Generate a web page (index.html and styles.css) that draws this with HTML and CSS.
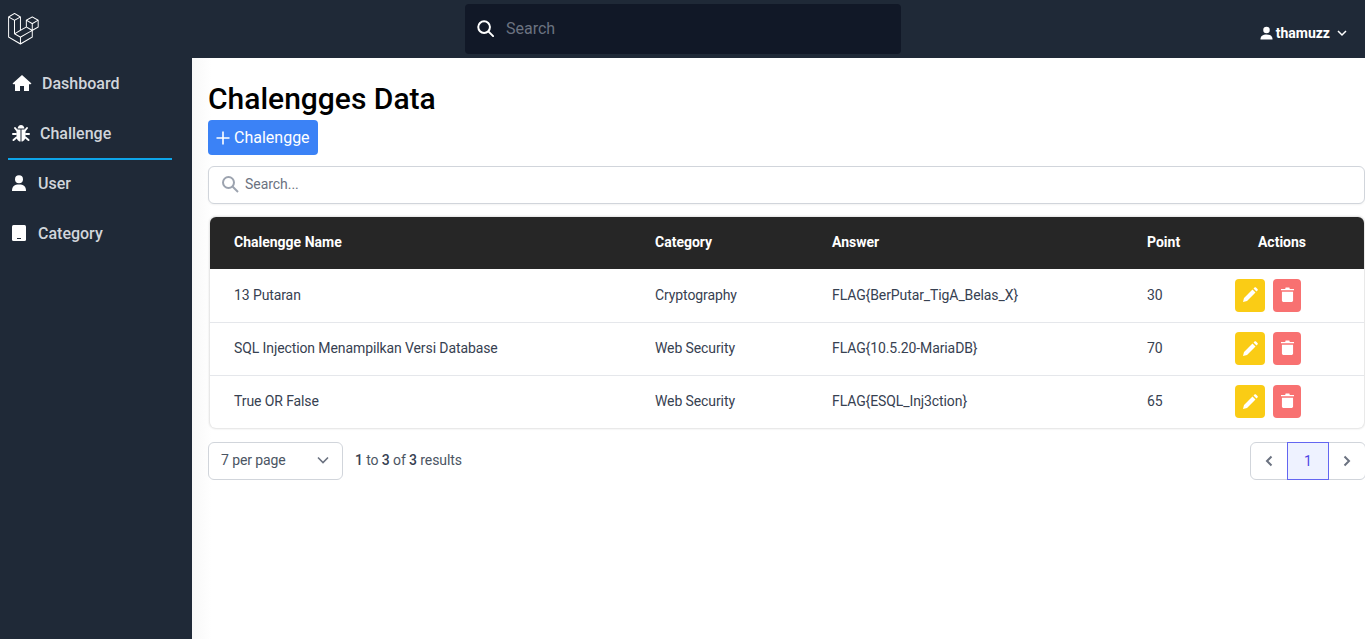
FILE: index.html
```html
<!DOCTYPE html>
<html lang="en">
<head>
<meta charset="utf-8">
<title>Chalengges Data</title>
<link rel="stylesheet" href="styles.css">
</head>
<body>
<header class="topbar">
  <div class="logo">
    <svg width="31" height="32" viewBox="0 0 50 52" fill="#fff"><path d="M49.626 11.564a.809.809 0 0 1 .028.209v10.972a.8.8 0 0 1-.402.694l-9.209 5.302V39.25c0 .286-.152.55-.4.694L20.42 51.01c-.044.025-.092.041-.14.058-.018.006-.035.017-.054.022a.805.805 0 0 1-.41 0c-.022-.006-.042-.018-.063-.026-.044-.016-.09-.03-.132-.054L.402 39.944A.801.801 0 0 1 0 39.25V6.334c0-.072.01-.142.028-.21.006-.023.02-.044.028-.067.015-.042.029-.085.051-.124.015-.026.037-.047.055-.071.023-.032.044-.065.071-.093.023-.023.053-.04.079-.06.029-.024.055-.05.088-.069h.001l9.61-5.533a.802.802 0 0 1 .8 0l9.61 5.533h.002c.032.02.059.045.088.068.026.02.055.038.078.06.028.029.048.062.072.094.017.024.04.045.054.071.023.04.036.082.052.124.008.023.022.044.028.068a.809.809 0 0 1 .028.209v20.559l8.008-4.611v-10.51c0-.07.01-.141.028-.208.007-.024.02-.045.028-.068.016-.042.03-.085.052-.124.015-.026.037-.047.054-.071.024-.032.044-.065.072-.093.023-.023.052-.04.078-.06.03-.024.056-.05.088-.069h.001l9.611-5.533a.801.801 0 0 1 .8 0l9.61 5.533c.034.02.06.045.09.068.025.02.054.038.077.06.028.029.048.062.072.094.018.024.04.045.054.071.023.039.036.082.052.124.009.023.022.044.028.068zm-1.574 10.718v-9.124l-3.363 1.936-4.646 2.675v9.124l8.01-4.611zm-9.61 16.505v-9.13l-4.57 2.61-13.05 7.448v9.216l17.62-10.144zM1.602 7.719v31.068L19.22 48.93v-9.214l-9.204-5.209-.003-.002-.004-.002c-.031-.018-.057-.044-.086-.066-.025-.02-.054-.036-.076-.058l-.002-.003c-.026-.025-.044-.056-.066-.084-.02-.027-.044-.05-.06-.078l-.001-.003c-.018-.03-.029-.066-.042-.1-.013-.03-.03-.058-.038-.09v-.001c-.01-.038-.012-.078-.016-.117-.004-.03-.012-.06-.012-.09v-.002-21.481L4.965 9.654 1.602 7.72zm8.81-5.994L2.405 6.334l8.005 4.609 8.006-4.61-8.006-4.608zm4.164 28.764l4.645-2.674V7.719l-3.363 1.936-4.646 2.675v20.096l3.364-1.937zM39.243 7.164l-8.006 4.609 8.006 4.609 8.005-4.61-8.005-4.608zm-.801 10.605l-4.646-2.675-3.363-1.936v9.124l4.645 2.674 3.364 1.937v-9.124zM20.02 38.33l11.743-6.704 5.87-3.35-8-4.606-9.211 5.303-8.395 4.833 7.993 4.524z"/></svg>
  </div>
  <div class="top-search">
    <svg class="top-search-icon" width="18" height="18" viewBox="0 0 20 20" fill="none" stroke="#fff" stroke-width="2.200"><circle cx="9" cy="9" r="6.500"/><path d="M14 14 19 19" stroke-linecap="round"/></svg>
    <span class="top-search-text">Search</span>
  </div>
  <div class="user">
    <svg width="13" height="14" viewBox="0 0 14 14" fill="#fff"><circle cx="7" cy="3.800" r="3.500"/><path d="M0.500 14c0-4 2.500-5.500 6.500-5.500s6.500 1.500 6.500 5.500z"/></svg>
    <span class="user-name">thamuzz</span>
    <svg class="user-caret" width="10" height="8" viewBox="0 0 10 8" fill="none" stroke="#fff" stroke-width="1.500"><path d="M1 2l4 4 4-4"/></svg>
  </div>
</header>
<div class="shell">
  <nav class="sidebar">
    <a class="nav-item">
      <svg class="nav-icon" width="20" height="18" viewBox="0 0 20 18" fill="#fff"><path d="M10 1 0.500 9.500 2 10.500 3 10v7h5v-5h4v5h5v-7l1 .5 1.500-1z"/></svg>
      <span class="nav-label nav-dash">Dashboard</span>
    </a>
    <a class="nav-item nav-active">
      <svg class="nav-icon" width="18" height="18" viewBox="0 0 18 18" fill="#fff"><path d="M5.500 4.500C6 2 7.500 1 9 1s3 1 3.500 3.500z"/><path d="M4.500 5.500h4v12C6 17.500 4.500 15 4.500 12zM9.500 5.500h4V12c0 3-1.500 5.500-4 5.500z"/><path d="M3 4l2 2.500M15 4l-2 2.500M1 10h3M14 10h3M1.500 16l3-2.500M16.500 16l-3-2.500" stroke="#fff" stroke-width="2" stroke-linecap="round"/></svg>
      <span class="nav-label nav-chal">Challenge</span>
    </a>
    <a class="nav-item">
      <svg class="nav-icon" width="14" height="16" viewBox="0 0 14 16" fill="#fff"><circle cx="7" cy="4.200" r="4"/><path d="M0 16c0-5 2.500-6.500 7-6.500s7 1.500 7 6.500z"/></svg>
      <span class="nav-label nav-user">User</span>
    </a>
    <a class="nav-item">
      <svg class="nav-icon" width="14" height="16" viewBox="0 0 14 16"><rect width="14" height="16" rx="1.500" fill="#fff"/><rect x="5" y="13" width="4" height="1" fill="#1f2937"/></svg>
      <span class="nav-label nav-user">Category</span>
    </a>
  </nav>
  <main class="content">
    <h1 class="title">Chalengges Data</h1>
    <button class="add-btn">
      <svg width="14" height="14" viewBox="0 0 14 14" stroke="#fff" stroke-width="1.600"><path d="M7 .5v13M.5 7h13"/></svg>
      <span>Chalengge</span>
    </button>
    <div class="filter">
      <svg width="18" height="18" viewBox="0 0 18 18" fill="none" stroke="#9ca3af" stroke-width="2"><circle cx="7.500" cy="7.500" r="5.500"/><path d="M11.500 11.500 17 17"/></svg>
      <span class="filter-text">Search...</span>
    </div>
    <div class="table-card">
      <table class="data">
        <thead>
          <tr><th class="c1">Chalengge Name</th><th class="c2">Category</th><th class="c3">Answer</th><th class="c4">Point</th><th class="c5">Actions</th></tr>
        </thead>
        <tbody>
          <tr>
            <td>13 Putaran</td><td>Cryptography</td><td>FLAG{BerPutar_TigA_Belas_X}</td><td>30</td>
            <td><div class="actions">
              <button class="act act-edit"><svg width="16" height="16" viewBox="0 0 16 16" fill="#fff"><path d="M10.500 2.500 13.500 5.500 5 14 1 15 2 11zM11.500 1.500l1-1c.5-.5 1-.5 1.500 0l1.500 1.500c.5.5.5 1 0 1.500l-1 1z"/></svg></button>
              <button class="act act-del"><svg width="13" height="15" viewBox="0 0 14 16" fill="#fff"><path d="M0 2h4.500l.5-1.500h4L9.500 2H14v1.500H0zM1 5h12v9.500c0 .8-.7 1.500-1.500 1.500h-9C1.700 16 1 15.300 1 14.500z"/></svg></button>
            </div></td>
          </tr>
          <tr>
            <td>SQL Injection Menampilkan Versi Database</td><td>Web Security</td><td>FLAG{10.5.20-MariaDB}</td><td>70</td>
            <td><div class="actions">
              <button class="act act-edit"><svg width="16" height="16" viewBox="0 0 16 16" fill="#fff"><path d="M10.500 2.500 13.500 5.500 5 14 1 15 2 11zM11.500 1.500l1-1c.5-.5 1-.5 1.500 0l1.500 1.500c.5.5.5 1 0 1.500l-1 1z"/></svg></button>
              <button class="act act-del"><svg width="13" height="15" viewBox="0 0 14 16" fill="#fff"><path d="M0 2h4.500l.5-1.500h4L9.500 2H14v1.500H0zM1 5h12v9.500c0 .8-.7 1.500-1.500 1.500h-9C1.700 16 1 15.300 1 14.500z"/></svg></button>
            </div></td>
          </tr>
          <tr>
            <td>True OR False</td><td>Web Security</td><td>FLAG{ESQL_Inj3ction}</td><td>65</td>
            <td><div class="actions">
              <button class="act act-edit"><svg width="16" height="16" viewBox="0 0 16 16" fill="#fff"><path d="M10.500 2.500 13.500 5.500 5 14 1 15 2 11zM11.500 1.500l1-1c.5-.5 1-.5 1.500 0l1.500 1.500c.5.5.5 1 0 1.500l-1 1z"/></svg></button>
              <button class="act act-del"><svg width="13" height="15" viewBox="0 0 14 16" fill="#fff"><path d="M0 2h4.500l.5-1.500h4L9.500 2H14v1.500H0zM1 5h12v9.500c0 .8-.7 1.500-1.500 1.500h-9C1.700 16 1 15.300 1 14.500z"/></svg></button>
            </div></td>
          </tr>
        </tbody>
      </table>
    </div>
    <div class="pager-row">
      <div class="per-page">
        <span>7 per page</span>
        <svg width="12" height="8" viewBox="0 0 12 8" fill="none" stroke="#6b7280" stroke-width="1.600"><path d="M1 1.500l5 5 5-5"/></svg>
      </div>
      <p class="result-text"><b>1</b> to <b>3</b> of <b>3</b> results</p>
      <div class="pager">
        <span class="pg pg-prev"><svg width="8" height="12" viewBox="0 0 8 12" fill="none" stroke="#6b7280" stroke-width="2"><path d="M6.500 1.500 2 6l4.500 4.500"/></svg></span>
        <span class="pg pg-cur">1</span>
        <span class="pg pg-next"><svg width="8" height="12" viewBox="0 0 8 12" fill="none" stroke="#6b7280" stroke-width="2"><path d="M1.500 1.500 6 6l-4.500 4.500"/></svg></span>
      </div>
    </div>
  </main>
</div>
</body>
</html>
```
FILE: styles.css
```css
* { box-sizing: border-box; }
html, body { margin: 0; height: 100%; overflow: hidden; }
body { font-family: Roboto, "Liberation Sans", sans-serif; background: #fff; color: #374151; }

.topbar { height: 58px; background: #1f2937; display: flex; align-items: flex-start; }
.logo { width: 465px; padding: 13px 0 0 8px; }
.logo svg { display: block; }
.top-search { width: 436px; height: 50px; margin-top: 4px; background: #111827; border-radius: 4px; display: flex; align-items: center; padding: 0 0 2px 11px; }
.top-search-text { margin-left: 12px; font-size: 16px; color: #6b7280; }
.user { margin-left: auto; display: flex; align-items: center; height: 18px; margin-top: 24px; padding-right: 18px; color: #fff; }
.user-name { font-size: 14px; font-weight: 700; margin-left: 3px; }
.user-caret { margin-left: 7px; }

.shell { display: flex; height: 581px; }
.sidebar { width: 192px; flex: none; background: #1f2937; padding: 0 20px 0 8px; }
.nav-item { display: flex; align-items: center; height: 50px; color: #e5e7eb; padding-left: 4px; }
.nav-active { height: 52px; margin-bottom: -2px; border-bottom: 2px solid #0ea5e9; }
.nav-label { font-size: 16px; font-weight: 500; color: #d1d5db; }
.nav-dash { margin-left: 10px; }
.nav-chal { margin-left: 10px; }
.nav-user { margin-left: 12px; }

.content { flex: 1; min-width: 0; padding: 23px 0 0 16px; background: linear-gradient(90deg, #f8f8f8, #fff 20px); }
.title { margin: 0; font-size: 30px; line-height: 36px; font-weight: 500; color: #000; }
.add-btn { display: flex; align-items: center; gap: 4px; height: 35px; margin-top: 3px; padding: 0 8px; background: #3b82f6; border: 0; border-radius: 4px; color: #fff; font: 400 16px Roboto, sans-serif; }
.filter { display: flex; align-items: center; height: 38px; margin-top: 11px; padding: 0 0 2px 12px; background: #fff; border: 1px solid #d1d5db; border-radius: 6px; box-shadow: 0 1px 2px rgba(0,0,0,.05); }
.filter-text { margin-left: 6px; font-size: 14px; color: #6b7280; letter-spacing: -.04px; }

.table-card { margin: 13px 1px 0 2px; background: #fff; border-radius: 6px; overflow: hidden; box-shadow: 0 0 2px 1px rgba(0,0,0,.12); }
.data { width: 100%; border-collapse: collapse; table-layout: fixed; font-size: 14px; }
.data thead { background: #262626; color: #fff; }
.data th { height: 52px; padding: 0 0 2px; text-align: left; font-weight: 700; }
.c1 { width: 445px; padding-left: 24px !important; }
.c2 { width: 177px; }
.c3 { width: 315px; }
.c4 { width: 62px; }
.c5 { text-align: center !important; padding-right: 9px !important; }
.data td { height: 53px; padding: 0 0 2px; color: #374151; border-top: 1px solid #e5e7eb; letter-spacing: -.1px; }
.data td:last-child { padding-bottom: 0; }
.data tbody tr:first-child td { border-top: 0; padding-bottom: 0; }
.data td:first-child { padding-left: 24px; }
.actions { display: flex; gap: 8px; padding-left: 26px; }
.act { display: flex; align-items: center; justify-content: center; height: 33px; padding: 0; border: 0; border-radius: 4px; }
.act-edit { width: 30px; background: #facc15; }
.act-del { width: 28px; background: #f87171; }
.act-del svg { margin-bottom: 2px; }

.pager-row { display: flex; align-items: center; margin-top: 14px; font-size: 14px; letter-spacing: -.1px; }
.per-page { display: flex; align-items: center; justify-content: space-between; width: 135px; height: 38px; padding: 0 13px 2px 12px; background: #fff; border: 1px solid #d1d5db; border-radius: 6px; color: #4b5563; }
.result-text { margin: 0 0 2px 12px; color: #4b5563; }
.result-text b { font-weight: 500; color: #374151; }
.pager { margin: 0 -1px 0 auto; display: flex; height: 38px; border: 1px solid #d1d5db; border-radius: 6px; }
.pg { display: flex; align-items: center; justify-content: center; }
.pg-prev { width: 36px; }
.pg-next { width: 36px; }
.pg-cur { width: 42px; margin: -1px 0; background: #eef2ff; border: 1px solid #6366f1; color: #4f46e5; }
```
